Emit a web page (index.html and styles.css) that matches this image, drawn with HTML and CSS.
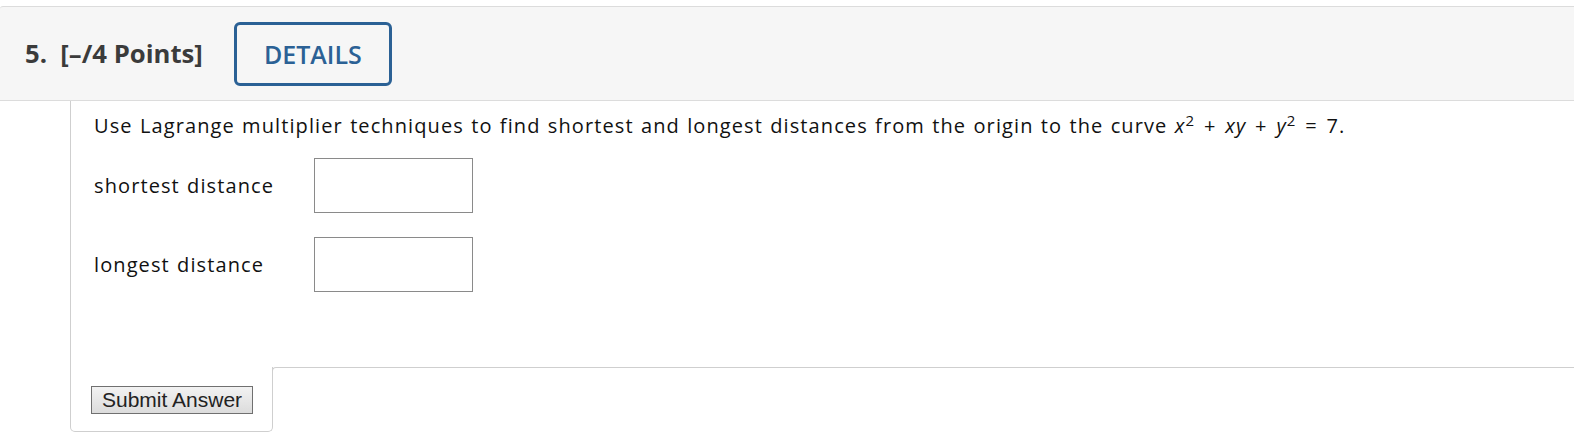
FILE: index.html
```html
<!DOCTYPE html>
<html lang="en">
<head>
    <meta charset="UTF-8">
    <title>Question 5</title>
    <link rel="stylesheet" href="styles.css">
</head>
<body>
    <div class="question-header">
        <span class="question-number">5.&nbsp; [&ndash;/4 Points]</span>
        <button class="details-button">DETAILS</button>
    </div>

    <div class="question-body">
        <p class="question-text">
            Use Lagrange multiplier techniques to find shortest and longest distances from the origin to the curve
            <span class="math"><i>x</i><sup>2</sup> + <i>xy</i> + <i>y</i><sup>2</sup> = 7.</span>
        </p>

        <div class="answer-row">
            <label for="shortest">shortest distance</label>
            <input type="text" id="shortest" class="answer-input">
        </div>
        <div class="answer-row">
            <label for="longest">longest distance</label>
            <input type="text" id="longest" class="answer-input">
        </div>
    </div>

    <div class="submit-row">
        <div class="submit-tab">
            <button class="submit-button">Submit Answer</button>
        </div>
        <div class="submit-rest"></div>
    </div>
</body>
</html>
```

FILE: styles.css
```css
body {
    margin: 0;
    padding-top: 6px;
    font-family: "Open Sans", sans-serif;
    color: #111;
    background-color: #fff;
}

.question-header {
    display: flex;
    align-items: center;
    height: 93px;
    padding-left: 25px;
    background-color: #f6f6f6;
    border-top: 1px solid #dcdcdc;
    border-bottom: 1px solid #dcdcdc;
    border-top-left-radius: 3px;
}

.question-number {
    font-weight: 700;
    font-size: 25.7px;
    color: #3b3b3b;
}

.details-button {
    margin-left: 31px;
    width: 158px;
    height: 64px;
    padding: 0;
    font-family: "Open Sans", sans-serif;
    font-weight: 600;
    font-size: 25px;
    color: #2b6195;
    background-color: transparent;
    border: 3px solid #2b6195;
    border-radius: 6px;
}

/* question text imitates Verdana: wide glyphs, loose spacing */
.question-body {
    margin-left: 70px;
    padding: 13px 0 75px 23px;
    border-left: 1px solid #cfcfcf;
    font-size: 20px;
    letter-spacing: 1.1px;
    word-spacing: 1px;
}

.question-text {
    margin: 0 0 20px 0;
    line-height: 24px;
}

.math {
    word-spacing: 2.5px;
}

.question-text sup {
    font-size: 15px;
    line-height: 0;
    vertical-align: 0.5em;
}

.answer-row {
    display: flex;
    align-items: center;
    margin-bottom: 24px;
}

.answer-row:last-child {
    margin-bottom: 0;
}

.answer-row label {
    width: 220px;
}

.answer-input {
    box-sizing: border-box;
    width: 159px;
    height: 55px;
    margin: 0;
    border: 1px solid #8a8a8a;
}

.submit-row {
    display: flex;
    margin-left: 70px;
}

.submit-tab {
    box-sizing: border-box;
    width: 203px;
    height: 65px;
    padding: 19px 0 0 20px;
    border-left: 1px solid #cfcfcf;
    border-right: 1px solid #cfcfcf;
    border-bottom: 1px solid #cfcfcf;
    border-bottom-left-radius: 5px;
    border-bottom-right-radius: 5px;
}

.submit-rest {
    flex: 1;
    height: 8px;
    margin-left: -1px;
    border-top: 1px solid #cfcfcf;
    border-left: 1px solid #cfcfcf;
    border-top-left-radius: 4px;
}

.submit-button {
    height: 28px;
    padding: 0 10px;
    font-family: "Liberation Sans", Arial, sans-serif;
    font-size: 21px;
    color: #222;
    background: linear-gradient(#f2f2f2, #dcdcdc);
    border: 1px solid #707070;
}
```
